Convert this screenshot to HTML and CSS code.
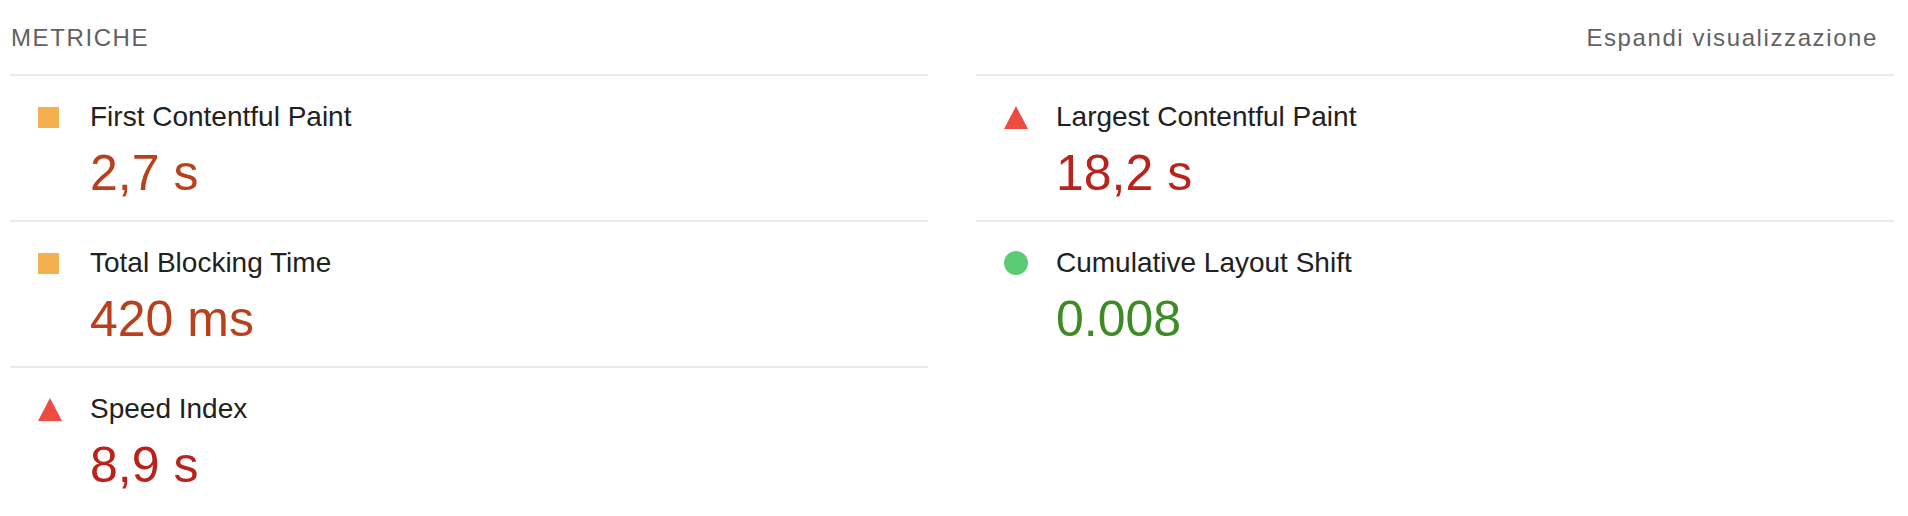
FILE: index.html
```html
<!DOCTYPE html>
<html lang="it">
<head>
<meta charset="utf-8">
<title>Metriche</title>
<link rel="stylesheet" href="styles.css">
</head>
<body>
  <div class="metrics">
    <div class="metrics-header">
      <span class="metrics-title">Metriche</span>
      <span class="metrics-toggle">Espandi visualizzazione</span>
    </div>
    <div class="metrics-grid">
      <div class="metric metric--average">
        <span class="metric-icon"></span>
        <div class="metric-title">First Contentful Paint</div>
        <div class="metric-value">2,7 s</div>
      </div>
      <div class="metric metric--fail">
        <svg class="metric-icon" viewBox="0 0 24 24"><polygon points="12,1 24,24 0,24"/></svg>
        <div class="metric-title">Largest Contentful Paint</div>
        <div class="metric-value">18,2 s</div>
      </div>
      <div class="metric metric--average">
        <span class="metric-icon"></span>
        <div class="metric-title">Total Blocking Time</div>
        <div class="metric-value">420 ms</div>
      </div>
      <div class="metric metric--pass">
        <span class="metric-icon"></span>
        <div class="metric-title">Cumulative Layout Shift</div>
        <div class="metric-value">0.008</div>
      </div>
      <div class="metric metric--fail">
        <svg class="metric-icon" viewBox="0 0 24 24"><polygon points="12,1 24,24 0,24"/></svg>
        <div class="metric-title">Speed Index</div>
        <div class="metric-value">8,9 s</div>
      </div>
    </div>
  </div>
</body>
</html>
```

FILE: styles.css
```css
body { margin: 0; background: #fff; font-family: "Liberation Sans", Helvetica, Arial, sans-serif; }

.metrics { padding: 0 14px 0 10px; }

.metrics-header {
  display: flex; justify-content: space-between; align-items: center;
  padding: 18px 16px 16px 1px; line-height: 40px;
  font-size: 24px; letter-spacing: 1.6px; color: #616161;
}
.metrics-title { text-transform: uppercase; }

.metrics-grid {
  display: grid; grid-template-columns: 1fr 1fr; column-gap: 48px;
}

.metric {
  display: grid; grid-template-columns: 24px 1fr; column-gap: 28px;
  padding: 21px 0 17px 28px;
  border-top: 2px solid #ebebeb;
}
.metric-icon { grid-column: 1; grid-row: 1; align-self: center; width: 24px; height: 24px; }
.metric-title { grid-column: 2; grid-row: 1; font-size: 28px; line-height: 40px; color: #212121; }
.metric-value { grid-column: 2; grid-row: 2; margin-top: 6px; font-size: 50px; line-height: 60px; }

/* score shapes */
.metric--average .metric-icon { width: 21px; height: 21px; background: #f4b04f; }
.metric--average .metric-value { color: #b9401d; }
.metric--fail .metric-icon { fill: #ec4c42; }
.metric--fail .metric-value { color: #b8231d; }
.metric--pass .metric-icon { border-radius: 50%; background: #5ccb74; }
.metric--pass .metric-value { color: #3e8b26; }
```
